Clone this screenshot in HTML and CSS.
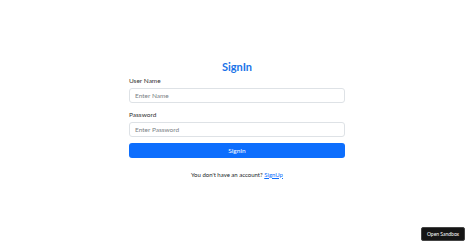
FILE: index.html
```html
<!DOCTYPE html>
<html>
<head>
<meta charset="utf-8">
<link rel="stylesheet" href="styles.css">
</head>
<body>
<main class="page">
  <form class="card">
    <h1 class="title">SignIn</h1>
    <label class="label">User Name</label>
    <input class="input" type="text" placeholder="Enter Name">
    <label class="label">Password</label>
    <input class="input" type="password" placeholder="Enter Password">
    <button class="btn" type="button">SignIn</button>
    <p class="foot">You don't have an account? <a href="#" class="link">SignUp</a></p>
  </form>
</main>
<button class="sandbox" type="button">Open Sandbox</button>
</body>
</html>
```
FILE: styles.css
```css
html, body { margin: 0; padding: 0; background: #fff; }
body { font-family: Lato, "Liberation Sans", sans-serif; color: #212529; width: 474px; height: 248px; overflow: hidden; position: relative; }
.page { display: flex; justify-content: center; padding-top: 60px; }
.card { width: 216px; display: flex; flex-direction: column; }
.title { margin: 0; text-align: center; font-size: 11px; font-weight: 700; color: #1a73e8; line-height: 14px; }
.label { font-size: 6.5px; line-height: 9px; margin: 2px 0 3px; color: #333; }
.input { box-sizing: border-box; height: 15px; border: 1px solid #dee2e6; border-radius: 3px; padding: 0 5px; font-family: inherit; font-size: 6.5px; margin-bottom: 4.5px; color: #212529; outline: none; }
.input::placeholder { color: #7a7f85; }
.btn { box-sizing: border-box; height: 15px; margin-top: 1.5px; border: none; border-radius: 3px; background: #0d6efd; color: #fff; font-family: inherit; font-size: 6.5px; }
.foot { margin: 13px 0 0; text-align: center; font-size: 6px; line-height: 8px; color: #212529; }
.link { color: #0d6efd; text-decoration: underline; }
.sandbox { position: absolute; right: 9px; bottom: 7px; height: 14px; width: 44px; padding: 0; background: #151515; color: #fff; border: 1px solid #444; border-radius: 2px; font-family: inherit; font-size: 5px; }
```
